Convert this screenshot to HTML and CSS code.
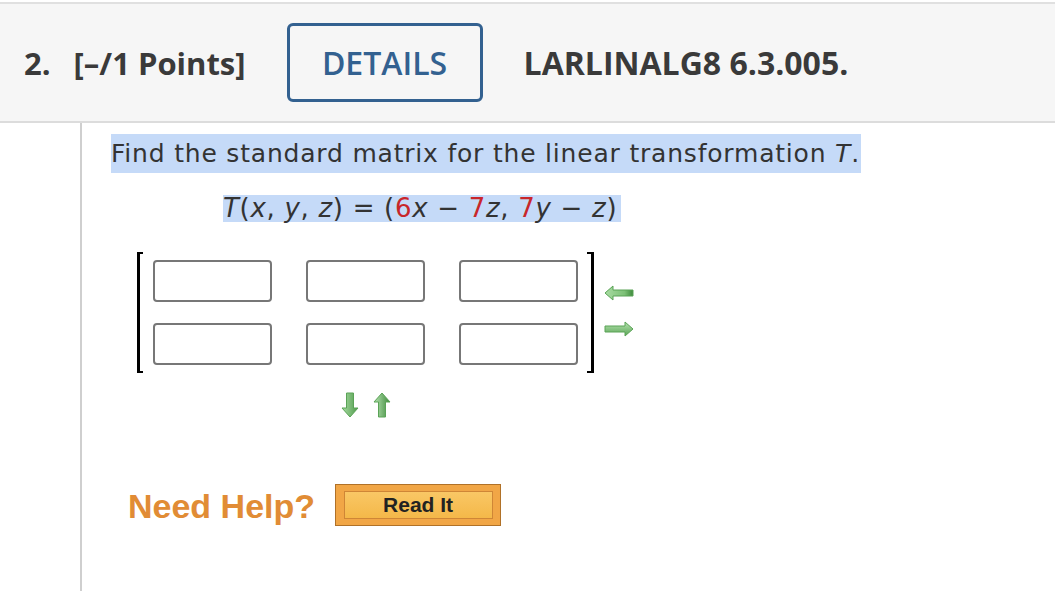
FILE: index.html
```html
<!DOCTYPE html>
<html>
<head>
<meta charset="utf-8">
<link rel="stylesheet" href="styles.css">
</head>
<body>
<div class="header">
  <span class="qnum">2.</span>
  <span class="points">[–/1 Points]</span>
  <span class="details">DETAILS</span>
  <span class="code">LARLINALG8 6.3.005.</span>
</div>
<div class="main">
  <div class="gutter"></div>
  <div class="content">
    <div class="prompt">Find the standard matrix for the linear transformation <i>T</i>.</div>
    <div class="eq"><span class="eq-hl"><i>T</i>(<i>x</i>, <i>y</i>, <i>z</i>) = (<span class="red">6</span><i>x</i> − <span class="red">7</span><i>z</i>, <span class="red">7</span><i>y</i> − <i>z</i>)</span></div>
    <div class="matrix-block">
      <div class="matrix-line">
        <div class="matrix">
          <div class="bracket left"></div>
          <div class="cells">
            <div class="cell"></div><div class="cell"></div><div class="cell"></div>
            <div class="cell"></div><div class="cell"></div><div class="cell"></div>
          </div>
          <div class="bracket right"></div>
        </div>
        <div class="side-arrows">
          <svg class="harrow" viewBox="0 0 30 16" width="30" height="16"><defs><linearGradient id="gl" x1="0" y1="0" x2="1" y2="0"><stop offset="0" stop-color="#a9dca3"/><stop offset="0.7" stop-color="#7cc076"/><stop offset="1" stop-color="#3e8a3c"/></linearGradient></defs><path d="M1 8 L9 1 L9 5 L29 5 L29 11 L9 11 L9 15 Z" fill="url(#gl)" stroke="#5aa356" stroke-width="1" stroke-linejoin="round"/></svg>
          <svg class="harrow" viewBox="0 0 30 16" width="30" height="16"><defs><linearGradient id="gr" x1="0" y1="0" x2="0" y2="1"><stop offset="0" stop-color="#b7e4b1"/><stop offset="1" stop-color="#5aa556"/></linearGradient></defs><path d="M29 8 L21 1 L21 5 L1 5 L1 11 L21 11 L21 15 Z" fill="url(#gr)" stroke="#5aa356" stroke-width="1" stroke-linejoin="round"/></svg>
        </div>
      </div>
      <div class="col-arrows">
        <svg viewBox="0 0 18 26" width="18" height="26"><defs><linearGradient id="gd" x1="0" y1="0" x2="1" y2="0"><stop offset="0" stop-color="#a9dca3"/><stop offset="1" stop-color="#4f9a4b"/></linearGradient></defs><path d="M9 25 L1 16 L5.5 16 L5.5 1 L12.5 1 L12.5 16 L17 16 Z" fill="url(#gd)" stroke="#5aa356" stroke-width="1" stroke-linejoin="round"/></svg>
        <svg viewBox="0 0 18 26" width="18" height="26"><defs><linearGradient id="gu" x1="0" y1="0" x2="1" y2="0"><stop offset="0" stop-color="#b7e4b1"/><stop offset="1" stop-color="#3e8a3c"/></linearGradient></defs><path d="M9 1 L1 10 L5.5 10 L5.5 25 L12.5 25 L12.5 10 L17 10 Z" fill="url(#gu)" stroke="#5aa356" stroke-width="1" stroke-linejoin="round"/></svg>
      </div>
    </div>
    <div class="help">
      <span class="need">Need Help?</span>
      <span class="readit"><span class="readit-inner">Read It</span></span>
    </div>
  </div>
</div>
</body>
</html>
```

FILE: styles.css
```css
html, body {
  margin: 0;
  padding: 0;
  background: #ffffff;
}
body {
  font-family: "Open Sans", "DejaVu Sans", sans-serif;
  color: #333;
  width: 1055px;
  height: 591px;
  overflow: hidden;
}
.header {
  margin-top: 2px;
  height: 117px;
  border-top: 2px solid #e0e0e0;
  border-bottom: 2px solid #dcdcdc;
  background: #f6f6f6;
  display: flex;
  align-items: center;
  padding-left: 24px;
  box-sizing: content-box;
  font-weight: 700;
  font-size: 31px;
  color: #3a3a3a;
}
.qnum {
  margin-right: 23px;
}
.points {
  margin-right: 41px;
}
.details {
  box-sizing: border-box;
  width: 196px;
  height: 79px;
  border: 3px solid #336190;
  border-radius: 6px;
  display: flex;
  align-items: center;
  justify-content: center;
  color: #336190;
  font-weight: 600;
  font-size: 32px;
  margin-right: 41px;
  margin-top: -1px;
}
.code {
  font-weight: 700;
  font-size: 32px;
}
.main {
  display: flex;
  height: 468px;
}
.gutter {
  width: 80px;
  border-right: 2px solid #cfcfcf;
  flex: none;
}
.content {
  padding-left: 29px;
  padding-top: 11px;
  font-family: "DejaVu Sans", Verdana, sans-serif;
  color: #333;
}
.prompt {
  display: inline-block;
  background: #c5daf8;
  font-size: 25px;
  letter-spacing: 0.8px;
  line-height: 39px;
  padding-right: 1px;
}
.eq {
  margin-top: 22px;
  margin-left: 112px;
  height: 27px;
  font-size: 26px;
  letter-spacing: 0.7px;
  line-height: 27px;
}
.eq-hl {
  display: inline-block;
  background: #c5daf8;
  padding-right: 4px;
}
.red {
  color: #c8262b;
}
.matrix-block {
  margin-top: 30px;
  margin-left: 26px;
  display: inline-flex;
  flex-direction: column;
}
.matrix-line {
  display: flex;
  align-items: center;
}
.matrix {
  display: flex;
  align-items: stretch;
}
.bracket {
  width: 3px;
  border-top: 2px solid #000;
  border-bottom: 2px solid #000;
}
.bracket.left {
  border-left: 3px solid #000;
}
.bracket.right {
  border-right: 3px solid #000;
  width: 4px;
}
.cells {
  display: grid;
  grid-template-columns: repeat(3, 119px);
  grid-auto-rows: 42px;
  column-gap: 34px;
  row-gap: 21px;
  padding: 8px 0;
  margin: 0 9px 0 10px;
}
.cell {
  box-sizing: border-box;
  border: 2px solid #777;
  border-radius: 4px;
  background: #fff;
}
.side-arrows {
  display: flex;
  flex-direction: column;
  gap: 20px;
  margin-left: 10px;
  margin-top: -3px;
}
.harrow {
  display: block;
}
.col-arrows {
  width: 457px;
  display: flex;
  justify-content: center;
  gap: 14px;
  margin-top: 19px;
}
.col-arrows svg {
  display: block;
}
.help {
  margin-top: 66px;
  margin-left: 17px;
  display: flex;
  align-items: center;
}
.need {
  font-family: "Liberation Sans", Arial, sans-serif;
  font-weight: 700;
  font-size: 34px;
  color: #e18c35;
  margin-right: 20px;
  margin-top: 2px;
}
.readit {
  box-sizing: border-box;
  width: 166px;
  height: 42px;
  border: 1px solid #b07128;
  background: #f1a646;
  display: flex;
  align-items: center;
  justify-content: center;
}
.readit-inner {
  box-sizing: border-box;
  width: 149px;
  height: 28px;
  border: 1px solid #cf8636;
  background: linear-gradient(#f9c765, #f4b849);
  display: flex;
  align-items: center;
  justify-content: center;
  font-family: "Liberation Sans", Arial, sans-serif;
  font-weight: 700;
  font-size: 21px;
  color: #222;
}
```
